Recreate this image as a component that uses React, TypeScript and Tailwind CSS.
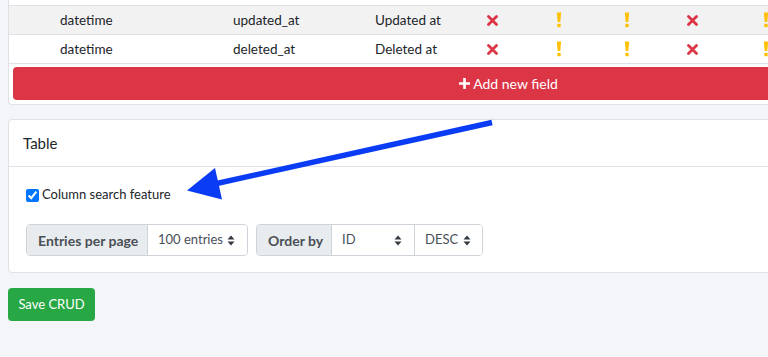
import React from "react";

const font = { fontFamily: "Lato, 'Noto Sans', sans-serif" };

function XIcon() {
  return (
    <svg width="11" height="11" viewBox="0 0 11 11" className="block">
      <path d="M1.5 1.5 L9.5 9.5 M9.5 1.5 L1.5 9.5" stroke="#dc3545" strokeWidth="2.8" strokeLinecap="round" />
    </svg>
  );
}

function Excl() {
  return (
    <svg width="6" height="16" viewBox="0 0 6 16" className="block">
      <path d="M0.8 0.5 H5.2 L4.3 10 H1.7 Z" fill="#ffc107" />
      <rect x="1.3" y="11.8" width="3.4" height="3.4" rx="0.6" fill="#ffc107" />
    </svg>
  );
}

function Caret() {
  return (
    <svg width="8" height="11" viewBox="0 0 8 11" className="block">
      <path d="M4 0.5 L7.5 4.5 H0.5 Z" fill="#343a40" />
      <path d="M4 10.5 L7.5 6.5 H0.5 Z" fill="#343a40" />
    </svg>
  );
}

function Row({ a, b, c, striped }: { a: string; b: string; c: string; striped?: boolean }) {
  return (
    <div
      className={`flex items-center h-[29px] border-t border-[#dee2e6] text-[13.5px] text-[#212529] ${striped ? "bg-[#f2f2f2]" : "bg-white"}`}
    >
      <div className="w-[51px] shrink-0" />
      <div className="w-[173px] shrink-0">{a}</div>
      <div className="w-[142px] shrink-0">{b}</div>
      <div className="w-[96px] shrink-0">{c}</div>
      <div className="w-[42px] shrink-0 flex justify-center"><XIcon /></div>
      <div className="w-[91px] shrink-0 flex justify-center"><Excl /></div>
      <div className="w-[46px] shrink-0 flex justify-center"><Excl /></div>
      <div className="w-[84px] shrink-0 flex justify-center"><XIcon /></div>
      <div className="w-[64px] shrink-0 flex justify-center"><Excl /></div>
    </div>
  );
}

export default function App() {
  return (
    <div className="w-[768px] h-[357px] overflow-hidden bg-[#f4f5f9] relative" style={font}>
      <div className="w-[1020px] pl-[8px]">
        {/* Card 1: fields table */}
        <div className="w-[1000px] bg-white border-x border-b border-[#dee2e6] rounded-b-[4px]">
          <div className="h-[5px] bg-white" />
          <Row a="datetime" b="updated_at" c="Updated at" striped />
          <Row a="datetime" b="deleted_at" c="Deleted at" />
          <div className="border-t border-[#dee2e6] pt-[3px] pb-[4px] px-[4px]">
            <button className="w-full h-[33px] bg-[#dc3545] rounded-[4px] text-white text-[14px] flex items-center justify-center gap-[2px]">
              <svg width="13" height="13" viewBox="0 0 13 13" className="block">
                <path d="M6.5 1 V12 M1 6.5 H12" stroke="white" strokeWidth="2.6" />
              </svg>
              <span>Add new field</span>
            </button>
          </div>
        </div>

        {/* Card 2: Table */}
        <div className="mt-[14px] w-[1000px] bg-white border border-[#dee2e6] rounded-[4px]">
          <div className="h-[47px] border-b border-[#dee2e6] flex items-center pl-[14px] text-[15px] text-[#212529]">
            Table
          </div>
          <div className="pl-[17px] pt-[18px] pb-[16px]">
            <label className="flex items-center h-[20px] text-[13px] text-[#212529] gap-[3px]">
              <input type="checkbox" defaultChecked className="w-[13px] h-[13px] m-0 accent-[#0075ff]" />
              <span>Column search feature</span>
            </label>
            <div className="mt-[19px] flex gap-[8px] text-[13px] text-[#495057]">
              <div className="flex h-[32px] border border-[#ced4da] rounded-[4px] overflow-hidden">
                <div className="w-[121px] bg-[#e9ecef] border-r border-[#ced4da] flex items-center pl-[11px] font-bold text-[14px] text-[#495057]">
                  Entries per page
                </div>
                <div className="w-[99px] flex items-center justify-between pl-[10px] pr-[12px] bg-white">
                  <span>100 entries</span>
                  <Caret />
                </div>
              </div>
              <div className="flex h-[32px] border border-[#ced4da] rounded-[4px] overflow-hidden">
                <div className="w-[75px] bg-[#e9ecef] border-r border-[#ced4da] flex items-center pl-[11px] font-bold text-[14px] text-[#495057]">
                  Order by
                </div>
                <div className="w-[83px] flex items-center justify-between pl-[10px] pr-[12px] bg-white border-r border-[#ced4da]">
                  <span>ID</span>
                  <Caret />
                </div>
                <div className="w-[67px] flex items-center justify-between pl-[10px] pr-[11px] bg-white">
                  <span>DESC</span>
                  <Caret />
                </div>
              </div>
            </div>
          </div>
        </div>

        <button className="mt-[15px] h-[33px] w-[87px] bg-[#28a745] rounded-[4px] text-white text-[13px] flex items-center justify-center">
          Save CRUD
        </button>
      </div>

      {/* Annotation arrow */}
      <svg className="absolute left-0 top-0 pointer-events-none" width="768" height="357">
        <line x1="492" y1="122.5" x2="210" y2="185" stroke="#0a3cf5" strokeWidth="5.5" />
        <path d="M187 190.5 L215 168 L222 199.5 Z" fill="#0a3cf5" />
      </svg>
    </div>
  );
}
